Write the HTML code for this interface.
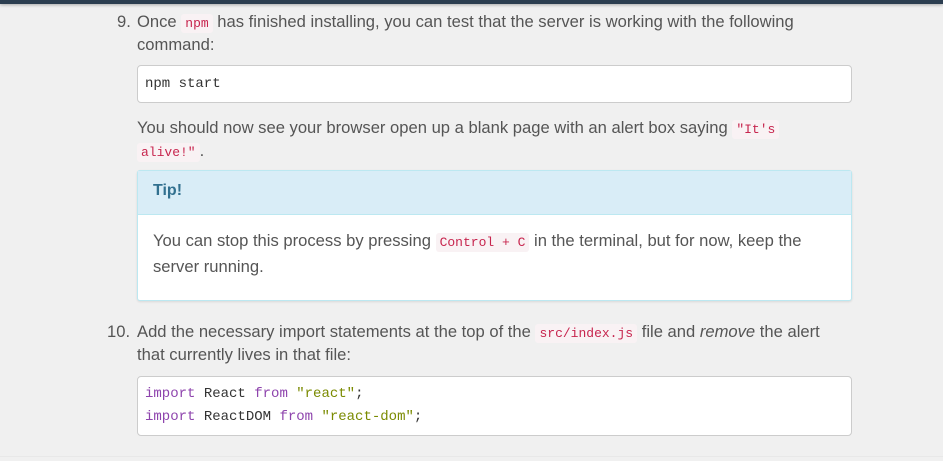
<!DOCTYPE html>
<html><head><style>
*{margin:0;padding:0;box-sizing:border-box}
body{width:943px;height:461px;background:#f0f0f0;font-family:"Liberation Sans",sans-serif;font-size:16.6px;color:#555;position:relative;overflow:hidden}
.top{position:absolute;left:0;top:0;width:943px;height:4px;background:#2c3e50;box-shadow:0 1px 3px rgba(0,0,0,.3)}
.t{position:absolute;left:137px;line-height:23px;white-space:nowrap}
.n{position:absolute;line-height:23px}
code{font-family:"Liberation Mono",monospace;font-size:13px;color:#c7254e;background:#f9f2f4;padding:2px 4px;border-radius:3px}
.pre{position:absolute;left:137px;width:715px;background:#fff;border:1px solid #ccc;border-radius:4px;font-family:"Liberation Mono",monospace;font-size:14px;color:#333;padding:0 7px;line-height:23px}
.k{color:#8e44ad}.s{color:#7a8a00}
.tip{position:absolute;left:137px;top:170px;width:715px;height:131px;background:#fff;border:1px solid #bce8f1;border-radius:3px;box-shadow:0 1px 2px rgba(0,0,0,.1)}
.th{height:44px;background:#d9edf7;border-bottom:1px solid #bce8f1;color:#31708f;font-weight:bold;padding:11px 15px;font-size:16px}
.tb{padding:14px 15px;line-height:24px}
</style></head><body>
<div class="top"></div>
<div class="n" style="left:117px;top:10px">9.</div>
<div class="t" style="top:10px">Once <code>npm</code> has finished installing, you can test that the server is working with the following</div>
<div class="t" style="top:33px">command:</div>
<div class="pre" style="top:65px;height:38px;padding-top:7px">npm start</div>
<div class="t" style="top:116px">You should now see your browser open up a blank page with an alert box saying <code>"It's</code></div>
<div class="t" style="top:139px"><code>alive!"</code>.</div>
<div class="tip"><div class="th">Tip!</div><div class="tb">You can stop this process by pressing <code>Control + C</code> in the terminal, but for now, keep the<br>server running.</div></div>
<div class="n" style="left:107px;top:320px">10.</div>
<div class="t" style="top:320px">Add the necessary import statements at the top of the <code>src/index.js</code> file and <i>remove</i> the alert</div>
<div class="t" style="top:343px">that currently lives in that file:</div>
<div class="pre" style="top:376px;height:60px;padding-top:6px"><span class="k">import</span> React <span class="k">from</span> <span class="s">"react"</span>;<br><span class="k">import</span> ReactDOM <span class="k">from</span> <span class="s">"react-dom"</span>;</div>
<div style="position:absolute;left:0;top:456px;width:943px;height:1px;background:#e8e8e8"></div>
</body></html>
